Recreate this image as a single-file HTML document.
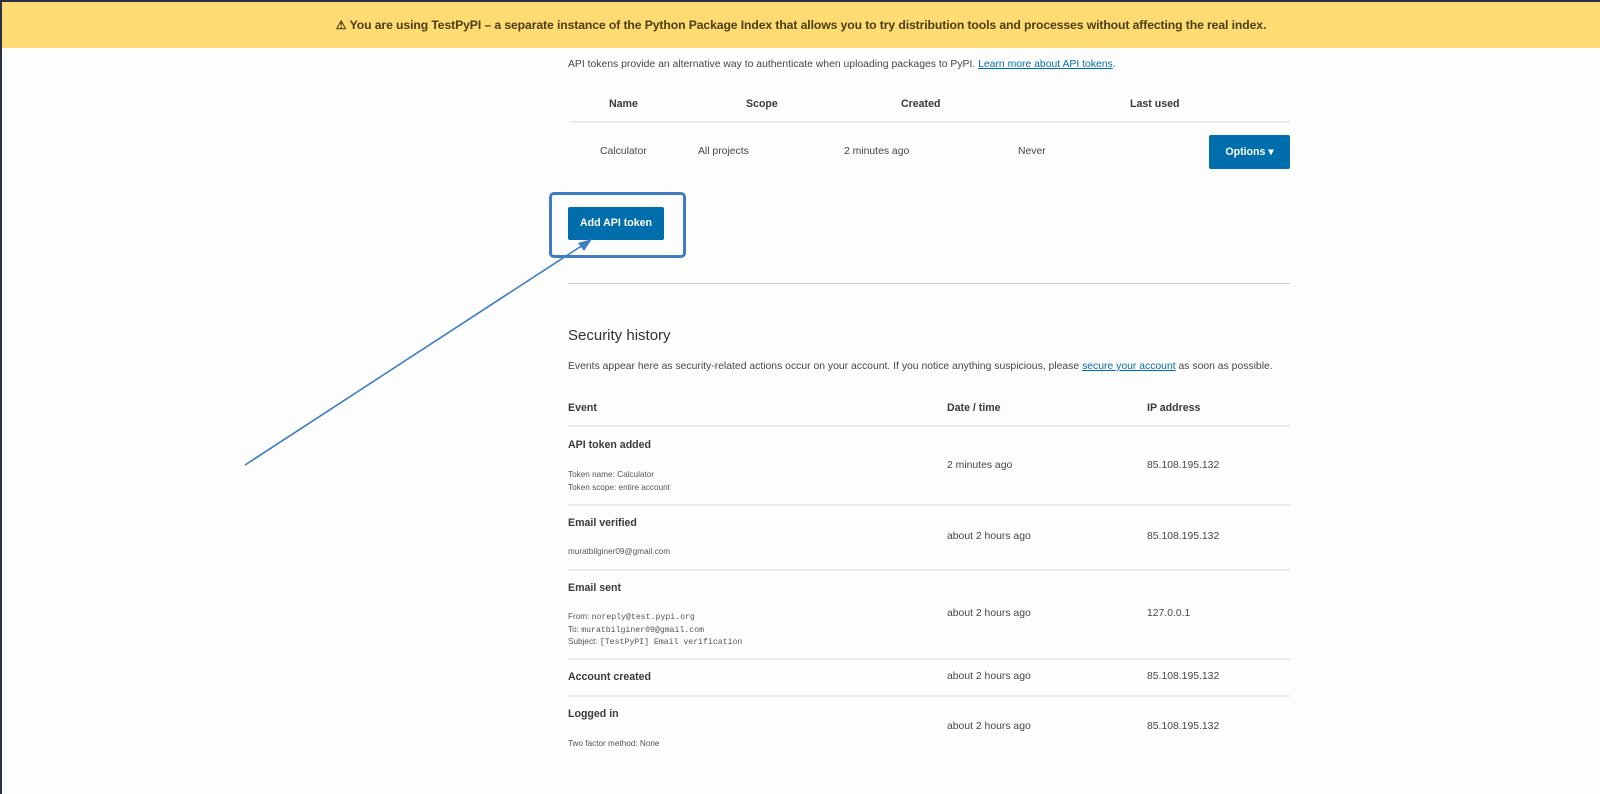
<!DOCTYPE html>
<html><head><meta charset="utf-8"><style>
*{margin:0;padding:0;box-sizing:border-box}
html,body{width:1600px;height:794px;overflow:hidden;background:#fdfdfd;font-family:"Liberation Sans Narrow","Liberation Sans",sans-serif;color:#464646}
.frame{position:absolute;left:0;top:0;width:1600px;height:794px;border-left:2px solid #2a2f45;border-top:2px solid #2a2f45}
.banner{position:absolute;left:2px;top:2px;width:1598px;height:46px;background:#ffdc73;font-weight:bold;font-size:12.2px;color:#4a3d10;text-align:center;line-height:46px;letter-spacing:-0.1px}
.a{position:absolute;white-space:nowrap}
.s{font-size:10.4px}
.b{font-weight:bold;font-size:10.6px;color:#3a3a3a}
.sm{font-size:8.2px;color:#555}
.mono{font-family:"Liberation Mono",monospace;font-size:8.2px}
.line{position:absolute;height:2px;background:#ececec}
.btn{position:absolute;background:#006dad;color:#fff;font-weight:bold;font-size:10.6px;border-radius:2px;text-align:center}
a{color:#006dad;text-decoration:underline}
</style></head><body>
<div class="frame"></div>
<div class="banner">⚠ You are using TestPyPI – a separate instance of the Python Package Index that allows you to try distribution tools and processes without affecting the real index.</div>

<div class="a s" style="left:568px;top:59px">API tokens provide an alternative way to authenticate when uploading packages to PyPI. <a>Learn more about API tokens</a>.</div>

<div class="a b" style="left:609px;top:98px">Name</div>
<div class="a b" style="left:746px;top:98px">Scope</div>
<div class="a b" style="left:901px;top:98px">Created</div>
<div class="a b" style="left:1130px;top:98px">Last used</div>
<div class="line" style="left:570px;top:121px;width:720px"></div>
<div class="a s" style="left:600px;top:146px">Calculator</div>
<div class="a s" style="left:698px;top:146px">All projects</div>
<div class="a s" style="left:844px;top:146px">2 minutes ago</div>
<div class="a s" style="left:1018px;top:146px">Never</div>
<div class="btn" style="left:1209px;top:135px;width:81px;height:34px;line-height:34px">Options ▾</div>

<div class="a" style="left:549px;top:192px;width:137px;height:66px;border:3px solid #3f7cc2;border-radius:5px"></div>
<div class="btn" style="left:568px;top:207px;width:96px;height:33px;line-height:33px">Add API token</div>
<svg class="a" style="left:0;top:0" width="1600" height="794"><line x1="245" y1="465" x2="586" y2="243" stroke="#3f7cc2" stroke-width="1.6"/><polygon points="592,239 578,243 584,251" fill="#3f7cc2"/></svg>

<div class="line" style="left:568px;top:283px;width:722px;height:1px;background:#ccc"></div>
<div class="a" style="left:568px;top:327px;font-size:15px;color:#333">Security history</div>
<div class="a s" style="left:568px;top:361px">Events appear here as security-related actions occur on your account. If you notice anything suspicious, please <a>secure your account</a> as soon as possible.</div>

<div class="a b" style="left:568px;top:402px">Event</div>
<div class="a b" style="left:947px;top:402px">Date / time</div>
<div class="a b" style="left:1147px;top:402px">IP address</div>
<div class="line" style="left:568px;top:425px;width:722px"></div>

<div class="a b" style="left:568px;top:439px">API token added</div>
<div class="a sm" style="left:568px;top:470px">Token name: Calculator</div>
<div class="a sm" style="left:568px;top:483px">Token scope: entire account</div>
<div class="a s" style="left:947px;top:460px">2 minutes ago</div>
<div class="a s" style="left:1147px;top:460px">85.108.195.132</div>
<div class="line" style="left:568px;top:504px;width:722px"></div>

<div class="a b" style="left:568px;top:517px">Email verified</div>
<div class="a sm" style="left:568px;top:547px">muratbilginer09@gmail.com</div>
<div class="a s" style="left:947px;top:531px">about 2 hours ago</div>
<div class="a s" style="left:1147px;top:531px">85.108.195.132</div>
<div class="line" style="left:568px;top:569px;width:722px"></div>

<div class="a b" style="left:568px;top:582px">Email sent</div>
<div class="a sm" style="left:568px;top:612px">From: <span class="mono">noreply@test.pypi.org</span></div>
<div class="a sm" style="left:568px;top:625px">To: <span class="mono">muratbilginer09@gmail.com</span></div>
<div class="a sm" style="left:568px;top:637px">Subject: <span class="mono">[TestPyPI] Email verification</span></div>
<div class="a s" style="left:947px;top:608px">about 2 hours ago</div>
<div class="a s" style="left:1147px;top:608px">127.0.0.1</div>
<div class="line" style="left:568px;top:658px;width:722px"></div>

<div class="a b" style="left:568px;top:671px">Account created</div>
<div class="a s" style="left:947px;top:671px">about 2 hours ago</div>
<div class="a s" style="left:1147px;top:671px">85.108.195.132</div>
<div class="line" style="left:568px;top:695px;width:722px"></div>

<div class="a b" style="left:568px;top:708px">Logged in</div>
<div class="a sm" style="left:568px;top:739px">Two factor method: None</div>
<div class="a s" style="left:947px;top:721px">about 2 hours ago</div>
<div class="a s" style="left:1147px;top:721px">85.108.195.132</div>
</body></html>
